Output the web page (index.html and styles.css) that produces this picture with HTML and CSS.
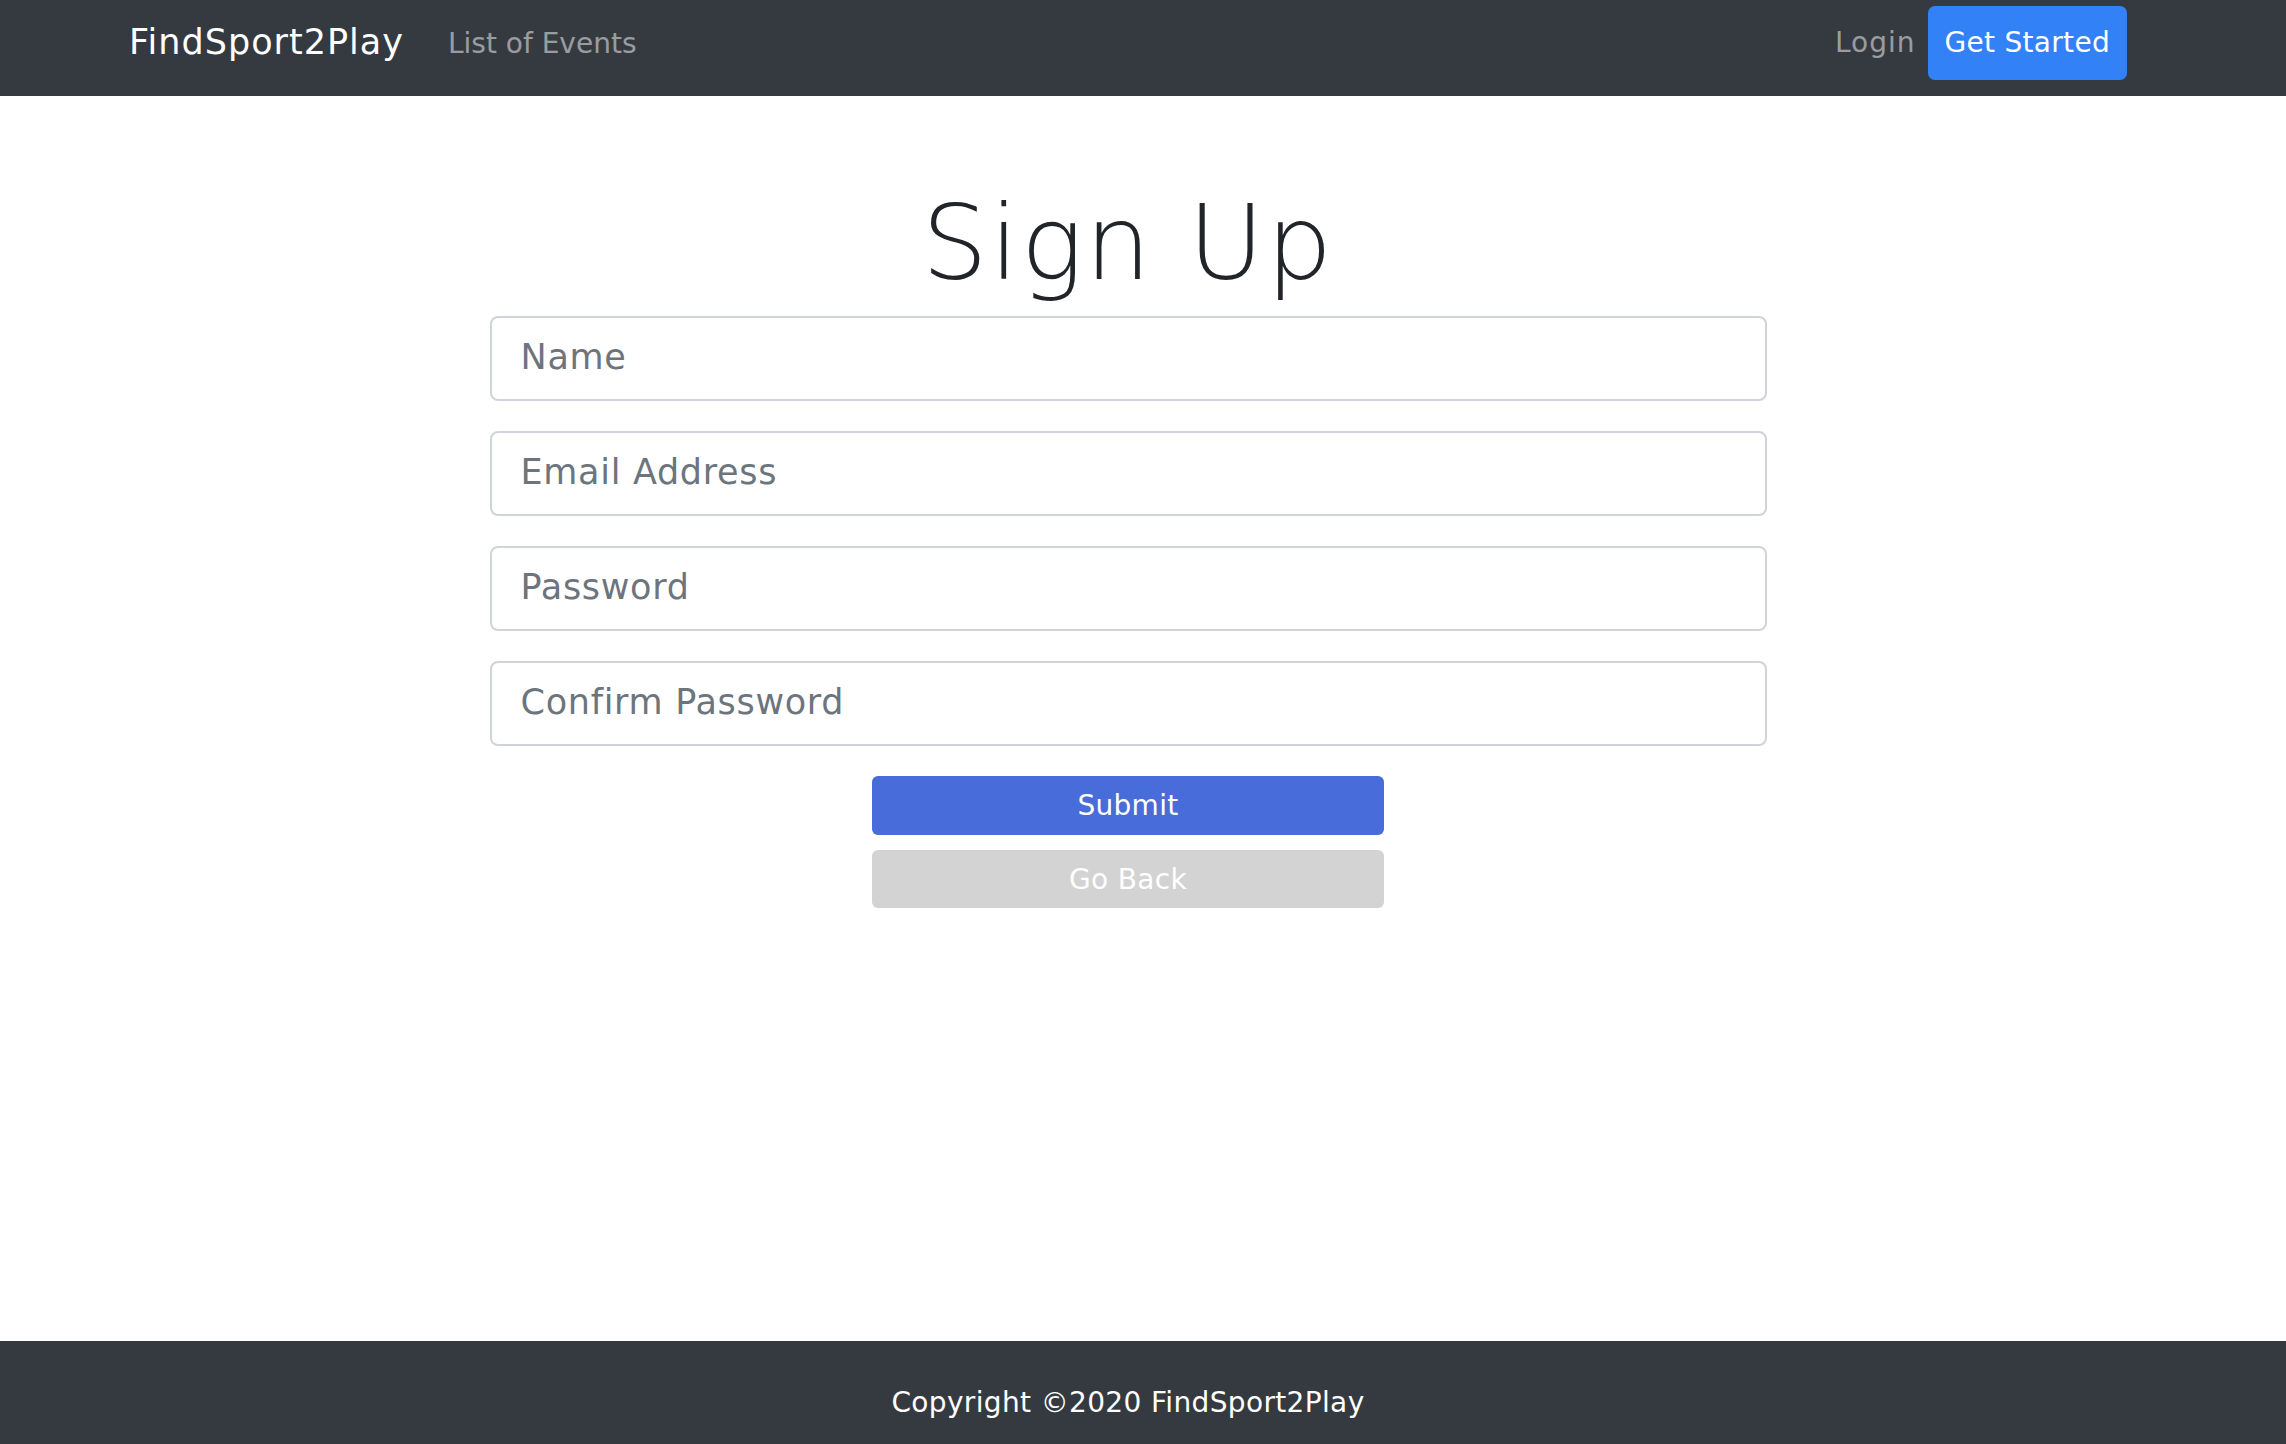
FILE: index.html
```html
<!DOCTYPE html>
<html lang="en">
<head>
  <meta charset="UTF-8" />
  <meta name="viewport" content="width=device-width, initial-scale=1.0" />
  <title>Sign Up - FindSport2Play</title>
  <link rel="stylesheet" href="styles.css">
</head>
<body>
  <header class="navbar">
    <div class="nav-inner">
      <a class="brand" href="#">FindSport2Play</a>
      <a class="nav-link" href="#">List of Events</a>
      <div class="nav-right">
        <a class="nav-link login" href="#">Login</a>
        <a class="btn-start" href="#">Get Started</a>
      </div>
    </div>
  </header>

  <main class="content">
    <form class="signup">
      <h1>Sign Up</h1>
      <input type="text" class="field" placeholder="Name" />
      <input type="email" class="field" placeholder="Email Address" />
      <input type="password" class="field" placeholder="Password" />
      <input type="password" class="field" placeholder="Confirm Password" />
      <div class="actions">
        <button type="submit" class="btn btn-submit">Submit</button>
        <button type="button" class="btn btn-back">Go Back</button>
      </div>
    </form>
  </main>

  <footer class="footer">
    <p>Copyright ©2020 FindSport2Play</p>
  </footer>
</body>
</html>
```

FILE: styles.css
```css
:root {
  --dark: #353a41;
  --gutter: 30px;
  --text: #212529;
  --muted: #6c757d;
}
* {
  box-sizing: border-box;
}
body {
  margin: 0;
  min-height: 100vh;
  display: flex;
  flex-direction: column;
  font-family: "DejaVu Sans", Verdana, sans-serif;
  color: var(--text);
  background: #fff;
}
a {
  text-decoration: none;
}

/* top bar */
.navbar {
  background: var(--dark);
  height: 96px;
  padding-right: var(--gutter);
}
.nav-inner {
  width: 1998px;
  height: 100%;
  margin: 0 auto;
  display: flex;
  align-items: center;
}
.brand {
  font-size: 35px;
  line-height: 42px;
  letter-spacing: 1px;
  color: #fff;
  margin-right: 30px;
  margin-bottom: 12px;
}
.nav-link {
  font-size: 28px;
  line-height: 42px;
  padding: 0 14px;
  color: rgba(255, 255, 255, 0.5);
  margin-bottom: 8px;
}
.nav-right {
  margin-left: auto;
  display: flex;
  align-items: center;
  margin-bottom: 11px;
}
.login {
  margin-bottom: 0;
  padding-right: 13px;
  letter-spacing: 1px;
}
.btn-start {
  display: flex;
  align-items: center;
  height: 74px;
  padding: 0 17px 0 16px;
  font-size: 28px;
  letter-spacing: 0.3px;
  color: #fff;
  background: #3381f6;
  border-radius: 7px;
}

/* form */
.content {
  flex: 1;
  padding: 87px var(--gutter) 0 0;
}
.signup {
  width: 1277px;
  margin: 0 auto;
}
.signup h1 {
  margin: 0 0 13px;
  text-align: center;
  font-size: 104px;
  line-height: 120px;
  letter-spacing: 2px;
  font-weight: 300;
}
.field {
  display: block;
  width: 100%;
  height: 85px;
  margin-bottom: 30px;
  padding: 0 29px 4px;
  font-family: inherit;
  font-size: 35px;
  letter-spacing: 0.7px;
  color: #495057;
  border: 2px solid #ced4da;
  border-radius: 8px;
  background: #fff;
}
.field::placeholder {
  color: var(--muted);
}
.actions {
  width: 512px;
  margin: 0 auto;
  display: flex;
  flex-direction: column;
  gap: 15px;
}
.btn {
  height: 59px;
  border: none;
  border-radius: 6px;
  font-family: inherit;
  font-size: 28px;
  letter-spacing: 0.3px;
  color: #fff;
  cursor: pointer;
}
.btn-submit {
  background: #486cd9;
}
.btn-back {
  height: 58px;
  background: #d3d3d3;
}

/* footer */
.footer {
  height: 103px;
  background: var(--dark);
  padding: 41px var(--gutter) 0 0;
  color: #fff;
  text-align: center;
}
.footer p {
  margin: 0;
  font-size: 28px;
  line-height: 42px;
  letter-spacing: 0.35px;
}
```
